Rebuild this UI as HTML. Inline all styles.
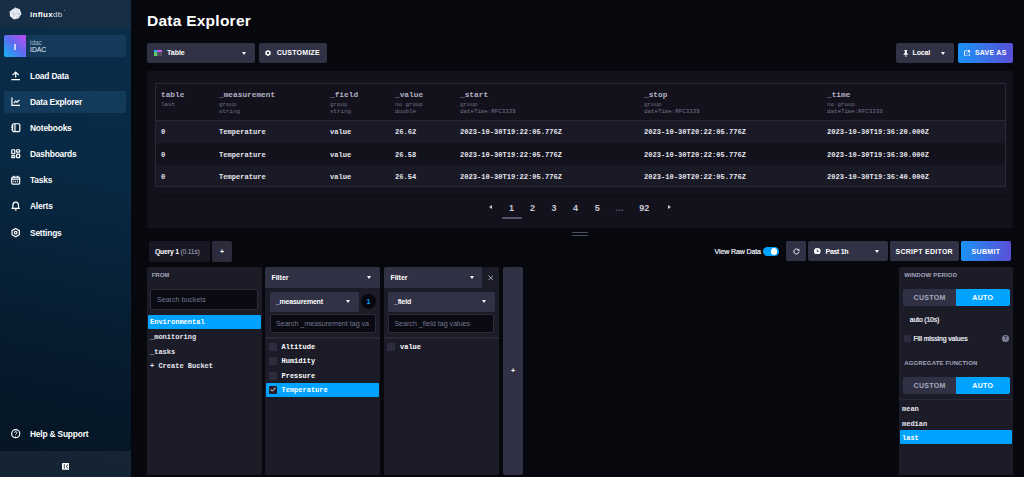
<!DOCTYPE html>
<html>
<head>
<meta charset="utf-8">
<title>Data Explorer</title>
<style>
*{box-sizing:border-box;margin:0;padding:0}
html,body{width:1024px;height:477px;overflow:hidden;background:#07070e;font-family:"Liberation Sans",sans-serif;color:#fff}
.abs{position:absolute}
i{font-style:normal}
#side{position:absolute;left:0;top:0;width:131px;height:477px;background:linear-gradient(192deg,#0a2d4a 0%,#082944 35%,#061a2c 75%,#051422 100%)}
#side .hdr{position:absolute;left:0;top:0;width:131px;height:28px;background:rgba(34,48,66,.55)}
#side .foot{position:absolute;left:0;top:451px;width:131px;height:26px;background:rgba(60,75,95,.28)}
.nav{position:absolute;left:4px;width:122px;height:21.5px;border-radius:2px}
.nav.on{background:rgba(40,90,130,.36)}
.nav span{position:absolute;left:26px;top:5px;font-size:9px;font-weight:bold;line-height:12px;white-space:nowrap;letter-spacing:-.2px;transform:scaleX(.93);transform-origin:0 0}
.nav svg{position:absolute;left:6.6px;top:6px;width:9.4px;height:9.4px;fill:none;stroke:#fff;stroke-width:1.3;overflow:visible}
#main{position:absolute;left:131px;top:0;width:893px;height:477px;background:#07070e}
.btn{position:absolute;height:20px;background:#323246;border-radius:2px;font-weight:bold;font-size:7px;line-height:20px;white-space:nowrap}
.b2{height:20.4px;line-height:21.4px}
.mono{font-family:"Liberation Mono",monospace}
.caret{position:absolute;width:0;height:0;border-left:2.9px solid transparent;border-right:2.9px solid transparent;border-top:3.2px solid #fff;margin-left:-.3px}
.th{position:absolute;top:90px;font-family:"Liberation Mono",monospace;font-size:7.8px;font-weight:bold;line-height:10px;color:#b2b2c4;white-space:nowrap}
.sh{position:absolute;font-family:"Liberation Mono",monospace;font-size:5.8px;line-height:7px;color:#74748c;white-space:nowrap}
.td{position:absolute;font-family:"Liberation Mono",monospace;font-weight:bold;font-size:7.08px;line-height:10px;color:#e7e7ef;white-space:nowrap}
.pg{position:absolute;top:202px;width:20px;text-align:center;font-size:9px;font-weight:bold;line-height:12px;color:#c9c9d6}
.panel{position:absolute;top:267px;height:207.8px;background:#1c1c29;border-radius:2px}
.lbl{position:absolute;font-size:6px;font-weight:bold;line-height:9px;color:#a6a6be;white-space:nowrap;letter-spacing:0}
.li{position:absolute;font-family:"Liberation Mono",monospace;font-weight:bold;font-size:7px;line-height:14px;color:#e7e7ef;white-space:nowrap;height:14px}
.li.sel{background:#00a3ff;color:#fff;border-radius:1px}
.inp{position:absolute;background:#0a0a12;border:1px solid #2b2b3c;border-radius:2px;font-size:7.1px;color:#74768e;white-space:nowrap;overflow:hidden}
.cb{position:absolute;width:8.2px;height:8.2px;background:#2c2c3e;border-radius:1px}
.seg{position:absolute;height:16.8px;font-size:7px;font-weight:bold;line-height:17.2px;text-align:center;letter-spacing:.3px}
</style>
</head>
<body>

<div id="side">
  <div class="hdr"></div>
  <svg class="abs" style="left:9px;top:7px" width="13" height="13" viewBox="0 0 13 13"><polygon points="6.2,0.6 10.8,2.2 12.4,6.9 9.6,11.3 4.9,12.4 1,9.3 0.6,4.4" fill="#eef2f6"/><path d="M6.2 0.6 L4.2 6.2 L9.6 11.3 M4.2 6.2 L0.6 4.4 M4.2 6.2 L4.9 12.4 M6.2 0.6 L10 7 L12.4 6.9 M10 7 L9.6 11.3 M4.2 6.2 L10 7" stroke="#aebccc" stroke-width=".6" fill="none"/></svg>
  <div class="abs" style="left:30px;top:8.8px;font-size:8px;line-height:11px;letter-spacing:.27px;white-space:nowrap"><b>influx</b><span style="color:#d5dde6">db</span></div>
  <div class="abs" style="left:63.6px;top:9.6px;width:1.6px;height:1.6px;background:#6f8196"></div>
  <div class="abs" style="left:4px;top:35px;width:122px;height:22px;background:rgba(40,90,130,.32);border-radius:2px"></div>
  <div class="abs" style="left:4px;top:35px;width:22px;height:22px;border-radius:2px 0 0 2px;background:linear-gradient(45deg,#10b7f5 0%,#5a6df0 50%,#c04af0 100%)"></div>
  <div class="abs" style="left:4px;top:35px;width:22px;height:22px;text-align:center;font-size:8.5px;font-weight:bold;line-height:24px">I</div>
  <div class="abs" style="left:30px;top:38.5px;font-size:6.3px;line-height:7px;color:#a9bccf">idac</div>
  <div class="abs" style="left:30px;top:45.5px;font-size:6.8px;line-height:8px;color:#e6edf5">IDAC</div>
  <div class="nav" style="top:64.9px"><svg viewBox="0 0 10 10"><path d="M5 1.4V7M1.7 4.4L5 1.1L8.3 4.4M0.4 9.2H9.6"/></svg><span>Load Data</span></div>
  <div class="nav on" style="top:91.0px"><svg viewBox="0 0 10 10"><path d="M1 0.6V9H9.6M3 6.6L5 4.4L6.4 5.6L9 3"/></svg><span>Data Explorer</span></div>
  <div class="nav" style="top:117.1px"><svg viewBox="0 0 10 10"><rect x="1.7" y=".8" width="7.7" height="8.4" rx="1.2"/><path d="M4.2 .8V9.2M.3 3H1.7M.3 5H1.7M.3 7H1.7"/></svg><span>Notebooks</span></div>
  <div class="nav" style="top:143.2px"><svg viewBox="0 0 10 10"><rect x=".8" y=".8" width="3.2" height="4.2" rx=".6"/><rect x="6" y=".8" width="3.2" height="2.6" rx=".6"/><rect x=".8" y="7" width="3.2" height="2.2" rx=".6"/><rect x="6" y="5.4" width="3.2" height="3.8" rx=".6"/></svg><span>Dashboards</span></div>
  <div class="nav" style="top:169.3px"><svg viewBox="0 0 10 10"><rect x=".8" y="2.3" width="8.4" height="7.3" rx="1"/><path d="M.8 4.4H9.2M3 .9V2.9M7 .9V2.9" /><path d="M2.6 6.9H3.6M4.5 6.9H5.5M6.4 6.9H7.4" stroke-width="1.4"/></svg><span>Tasks</span></div>
  <div class="nav" style="top:195.4px"><svg viewBox="0 0 10 10"><path d="M2 7.6V4.6A3 3.4 0 0 1 8 4.6V7.6M.6 7.8H9.4M4 9.5H6"/></svg><span>Alerts</span></div>
  <div class="nav" style="top:221.5px"><svg viewBox="0 0 10 10"><polygon points="5,.6 8.9,2.8 8.9,7.2 5,9.4 1.1,7.2 1.1,2.8"/><circle cx="5" cy="5" r="1.4"/></svg><span>Settings</span></div>
  <div class="nav" style="top:422.8px"><svg viewBox="0 0 10 10"><circle cx="5" cy="5" r="4.3"/><path d="M3.8 4A1.2 1.2 0 1 1 5.4 5.1Q5 5.3 5 6" stroke-width="1"/><circle cx="5" cy="7.4" r=".55" fill="#fff" stroke="none"/></svg><span>Help &amp; Support</span></div>
  <div class="foot"></div>
  <svg class="abs" style="left:61.7px;top:463.2px" width="7.6" height="6.8" viewBox="0 0 7.6 6.8"><rect x="0" y="0" width="7.6" height="6.8" rx=".9" fill="#fff"/><path d="M2.3 1V5.8" stroke="#16283a" stroke-width=".8"/><path d="M6.2 1.6L4 3.4L6.2 5.2" fill="none" stroke="#16283a" stroke-width=".9"/></svg>
</div>
<div class="abs" id="title" style="left:147px;top:11.7px;font-size:15.5px;font-weight:bold;line-height:17px;letter-spacing:.25px;white-space:nowrap">Data Explorer</div>
<div class="btn" style="left:147px;top:43px;width:108px"><svg class="abs" style="left:6.8px;top:6.8px" width="8.4" height="6.2" viewBox="0 0 8.4 6.2"><rect x="0" y="0" width="3.2" height="2.2" fill="#22adf6"/><rect x="3.2" y="0" width="5.2" height="2.2" fill="#c95af0"/><rect x="0" y="2.2" width="3.2" height="4" fill="#62d35f"/><rect x="3.2" y="2.2" width="5.2" height="4" fill="#5d5d70"/><path d="M3.2 4.2H8.4M5.8 2.2V6.2" stroke="#323246" stroke-width=".5"/></svg><span class="abs" style="left:20px">Table</span><i class="caret" style="left:95.5px;top:8.5px"></i></div>
<div class="btn" style="left:259px;top:43px;width:68px"><svg class="abs" style="left:6.4px;top:7.2px" width="6" height="6" viewBox="0 0 10 10"><polygon points="5,0 9.4,2.5 9.4,7.5 5,10 .6,7.5 .6,2.5" fill="#fff"/><circle cx="5" cy="5" r="1.9" fill="#323246"/></svg><span class="abs" style="left:17.7px;letter-spacing:.25px">CUSTOMIZE</span></div>
<div class="btn" style="left:896px;top:43px;width:58px"><svg class="abs" style="left:6.5px;top:6.5px" width="5.6" height="7" viewBox="0 0 8 10"><path d="M2 0H6V1H5.4V4.2L7.4 6V6.8H.6V6L2.6 4.2V1H2Z" fill="#fff"/><path d="M4 6.8V10" stroke="#fff" stroke-width="1.2"/></svg><span class="abs" style="left:16.5px;letter-spacing:-.15px">Local</span><i class="caret" style="left:45px;top:8.5px"></i></div>
<div class="btn" style="left:957.5px;top:43px;width:55.5px;background:linear-gradient(90deg,#1a93f7,#5a4fd6)"><svg class="abs" style="left:6px;top:6.8px" width="6.6" height="6.6" viewBox="0 0 10 10"><path d="M4.2 1.2H1.6Q.8 1.2 .8 2V8.4Q.8 9.2 1.6 9.2H8Q8.8 9.2 8.8 8.4V5.8" fill="none" stroke="#fff" stroke-width="1.5"/><path d="M5.6 .4H9.6V4.4ZM9 1L4.6 5.4" fill="#fff" stroke="#fff" stroke-width="1.3"/></svg><span class="abs" style="left:17.4px;letter-spacing:.25px">SAVE AS</span></div>
<div class="abs" style="left:147px;top:71px;width:866px;height:157px;background:#12111c;border-radius:2px"></div>
<div class="abs" style="left:155px;top:83px;width:851px;height:104px;border:1px solid #282836"></div>
<div class="abs" style="left:156px;top:120px;width:849px;height:1px;background:#282836"></div>
<div class="abs" style="left:156px;top:121px;width:849px;height:22px;background:#1a1a26"></div>
<div class="abs" style="left:156px;top:165px;width:849px;height:21px;background:#1a1a26"></div>
<div class="abs" style="left:155px;top:195px;width:851px;height:1px;background:#0a0a12"></div>
<div class="th" style="left:161px">table</div>
<div class="sh" style="left:161px;top:101px">last</div>
<div class="td" style="left:161px;top:127px">0</div>
<div class="td" style="left:161px;top:149.5px">0</div>
<div class="td" style="left:161px;top:171.5px">0</div>
<div class="th" style="left:219px">_measurement</div>
<div class="sh" style="left:219px;top:101px">group</div>
<div class="sh" style="left:219px;top:108px">string</div>
<div class="td" style="left:219px;top:127px">Temperature</div>
<div class="td" style="left:219px;top:149.5px">Temperature</div>
<div class="td" style="left:219px;top:171.5px">Temperature</div>
<div class="th" style="left:330px">_field</div>
<div class="sh" style="left:330px;top:101px">group</div>
<div class="sh" style="left:330px;top:108px">string</div>
<div class="td" style="left:330px;top:127px">value</div>
<div class="td" style="left:330px;top:149.5px">value</div>
<div class="td" style="left:330px;top:171.5px">value</div>
<div class="th" style="left:395px">_value</div>
<div class="sh" style="left:395px;top:101px">no group</div>
<div class="sh" style="left:395px;top:108px">double</div>
<div class="td" style="left:395px;top:127px">26.62</div>
<div class="td" style="left:395px;top:149.5px">26.58</div>
<div class="td" style="left:395px;top:171.5px">26.54</div>
<div class="th" style="left:460px">_start</div>
<div class="sh" style="left:460px;top:101px">group</div>
<div class="sh" style="left:460px;top:108px">dateTime:RFC3339</div>
<div class="td" style="left:460px;top:127px">2023-10-30T19:22:05.776Z</div>
<div class="td" style="left:460px;top:149.5px">2023-10-30T19:22:05.776Z</div>
<div class="td" style="left:460px;top:171.5px">2023-10-30T19:22:05.776Z</div>
<div class="th" style="left:644px">_stop</div>
<div class="sh" style="left:644px;top:101px">group</div>
<div class="sh" style="left:644px;top:108px">dateTime:RFC3339</div>
<div class="td" style="left:644px;top:127px">2023-10-30T20:22:05.776Z</div>
<div class="td" style="left:644px;top:149.5px">2023-10-30T20:22:05.776Z</div>
<div class="td" style="left:644px;top:171.5px">2023-10-30T20:22:05.776Z</div>
<div class="th" style="left:827px">_time</div>
<div class="sh" style="left:827px;top:101px">no group</div>
<div class="sh" style="left:827px;top:108px">dateTime:RFC3339</div>
<div class="td" style="left:827px;top:127px">2023-10-30T19:36:20.000Z</div>
<div class="td" style="left:827px;top:149.5px">2023-10-30T19:36:30.000Z</div>
<div class="td" style="left:827px;top:171.5px">2023-10-30T19:36:40.000Z</div>
<div class="pg" style="left:501.6px">1</div>
<div class="pg" style="left:522.4px">2</div>
<div class="pg" style="left:544.0px">3</div>
<div class="pg" style="left:565.5px">4</div>
<div class="pg" style="left:587.3px">5</div>
<div class="pg" style="left:609.4px;color:#5c5c74">…</div>
<div class="pg" style="left:634.2px">92</div>
<div class="abs" style="left:502px;top:217px;width:20px;height:2px;background:#55556e;border-radius:1px"></div>
<i class="abs" style="left:489px;top:205px;border-top:2.5px solid transparent;border-bottom:2.5px solid transparent;border-right:3px solid #c9c9d6"></i>
<i class="abs" style="left:667.5px;top:205px;border-top:2.5px solid transparent;border-bottom:2.5px solid transparent;border-left:3px solid #c9c9d6"></i>
<div class="abs" style="left:572px;top:232px;width:16px;height:1px;background:#4b4b63"></div>
<div class="abs" style="left:572px;top:235px;width:16px;height:1px;background:#4b4b63"></div>
<div class="abs" style="left:149px;top:241px;width:61px;height:20.5px;background:#181824;border-radius:2px;font-size:6.8px;letter-spacing:-.22px;line-height:21.5px;white-space:nowrap"><span class="abs" style="left:6px"><b>Query 1</b> <span style="color:#a9a9bd">(0.11s)</span></span></div>
<div class="abs" style="left:212px;top:241px;width:20px;height:20.5px;background:#2b2b3b;border-radius:2px;font-size:7px;font-weight:bold;line-height:21.6px;text-align:center">+</div>
<div class="abs" style="left:714.6px;top:246.8px;font-size:7px;line-height:10px;white-space:nowrap;color:#eeeef4;letter-spacing:-.12px;-webkit-text-stroke:.22px #eeeef4">View Raw Data</div>
<div class="abs" style="left:763px;top:246.8px;width:15.7px;height:9.2px;border-radius:4.6px;background:#00a3ff"></div>
<div class="abs" style="left:770.7px;top:248.1px;width:6.6px;height:6.6px;border-radius:3.3px;background:#fff"></div>
<div class="btn b2" style="left:786.4px;top:241px;width:20px"><svg class="abs" style="left:6.4px;top:6.9px" width="6.8" height="6.8" viewBox="0 0 8 8"><path d="M6.6 2.6A3 3 0 1 0 7 4.2" fill="none" stroke="#fff" stroke-width="1.1"/><path d="M7.4 .8V3.2H5Z" fill="#fff"/></svg></div>
<div class="btn b2" style="left:808.3px;top:241px;width:79.3px"><svg class="abs" style="left:6.2px;top:6.9px" width="6.6" height="6.6" viewBox="0 0 10 10"><circle cx="5" cy="5" r="5" fill="#fff"/><path d="M5 2.2V5.2H7.4" fill="none" stroke="#323246" stroke-width="1.3"/></svg><span class="abs" style="left:17.3px;letter-spacing:-.33px">Past 1h</span><i class="caret" style="left:66.9px;top:8.5px"></i></div>
<div class="btn b2" style="left:890px;top:241px;width:69px"><span class="abs" style="left:5.5px;letter-spacing:.27px">SCRIPT EDITOR</span></div>
<div class="btn b2" style="left:961px;top:241px;width:50px;background:linear-gradient(90deg,#1a93f7,#5a4fd6)"><span class="abs" style="left:10.6px;letter-spacing:.32px">SUBMIT</span></div>
<div class="panel" style="left:147.2px;width:114.8px"></div>
<div class="lbl" style="left:151.7px;top:270.5px">FROM</div>
<div class="inp" style="left:150.3px;top:289.2px;width:107.5px;height:20.6px;line-height:20.6px;padding-left:5.7px">Search buckets</div>
<div class="li sel" style="left:148.2px;top:315.2px;width:112.4px;padding-left:1.8px">Environmental</div>
<div class="li" style="left:150px;top:330px">_monitoring</div>
<div class="li" style="left:150px;top:345px">_tasks</div>
<div class="li" style="left:150px;top:359px">+ Create Bucket</div>
<div class="panel" style="left:265px;width:115px"></div>
<div class="abs" style="left:265px;top:267px;width:115px;height:21px;background:#313145;border-radius:2px 2px 0 0"></div>
<div class="abs" style="left:271.4px;top:272.5px;font-size:7px;font-weight:bold;line-height:10px">Filter</div>
<i class="caret" style="left:367.3px;top:276px"></i>
<div class="btn" style="left:270px;top:291.6px;width:88.6px;height:20.2px"><span class="abs" style="left:5.8px;font-size:7px;letter-spacing:-.2px">_measurement</span><i class="caret" style="left:76.2px;top:8.5px"></i></div>
<div class="abs" style="left:361px;top:294px;width:15px;height:15px;border-radius:8px;background:#07070e;color:#00a3ff;font-size:7px;font-weight:bold;line-height:15px;text-align:center">1</div>
<div class="inp" style="left:270px;top:313.7px;width:105.5px;height:19.5px;line-height:19.4px;padding-left:5px">Search _measurement tag va</div>
<div class="abs" style="left:265px;top:337px;width:115px;height:1.5px;background:#272739"></div>
<div class="cb" style="left:269px;top:342.5px"></div>
<div class="li" style="left:281.5px;top:339.5px;color:#fff">Altitude</div>
<div class="cb" style="left:269px;top:357.2px"></div>
<div class="li" style="left:281.5px;top:354.2px;color:#fff">Humidity</div>
<div class="cb" style="left:269px;top:371.9px"></div>
<div class="li" style="left:281.5px;top:368.9px;color:#fff">Pressure</div>
<div class="li sel" style="left:266px;top:383.1px;width:113px"></div>
<div class="cb" style="left:269px;top:386.1px;background:#241e2a"><svg class="abs" style="left:1px;top:1.4px" width="6" height="5" viewBox="0 0 6 5"><path d="M.5 2.4L2.3 4.2L5.6 .6" fill="none" stroke="#fff" stroke-width=".9"/></svg></div>
<div class="li" style="left:281.5px;top:383.1px;color:#fff">Temperature</div>
<div class="panel" style="left:384.2px;width:114.6px"></div>
<div class="abs" style="left:384.2px;top:267px;width:98.3px;height:21px;background:#313145;border-radius:2px 0 0 0"></div>
<div class="abs" style="left:390.4px;top:272.5px;font-size:7px;font-weight:bold;line-height:10px">Filter</div>
<i class="caret" style="left:469.8px;top:276px"></i>
<svg class="abs" style="left:487.6px;top:275px" width="5.6" height="5.6" viewBox="0 0 6 6"><path d="M.4 .4L5.6 5.6M5.6 .4L.4 5.6" stroke="#b4b4cc" stroke-width=".9"/></svg>
<div class="btn" style="left:388.2px;top:291.6px;width:106.8px;height:20.2px"><span class="abs" style="left:5.8px;font-size:7px;letter-spacing:-.2px">_field</span><i class="caret" style="left:94px;top:8.5px"></i></div>
<div class="inp" style="left:388.4px;top:313.7px;width:106px;height:19.5px;line-height:19.4px;padding-left:5px">Search _field tag values</div>
<div class="abs" style="left:384px;top:337px;width:114.6px;height:1.5px;background:#272739"></div>
<div class="cb" style="left:387.2px;top:342.6px"></div>
<div class="li" style="left:400px;top:339.5px;color:#fff">value</div>
<div class="panel" style="left:503px;width:20px;background:#313145"></div>
<div class="abs" style="left:503px;top:365px;width:20px;text-align:center;font-size:7px;font-weight:bold;line-height:12px">+</div>
<div class="panel" style="left:899.3px;width:113.7px"></div>
<div class="lbl" style="left:904.2px;top:270.8px;letter-spacing:.15px">WINDOW PERIOD</div>
<div class="seg" style="left:903.2px;top:289px;width:52.8px;background:#313145;color:#a9a9bd;border-radius:2px 0 0 2px">CUSTOM</div>
<div class="seg" style="left:956px;top:289px;width:53.6px;background:#00a3ff;border-radius:0 2px 2px 0">AUTO</div>
<div class="abs" style="left:909.8px;top:315.2px;font-size:6.8px;letter-spacing:-.12px;line-height:10px;color:#eeeef4;white-space:nowrap;-webkit-text-stroke:.22px #eeeef4">auto (10s)</div>
<div class="cb" style="left:904px;top:335px;width:7px;height:7px"></div>
<div class="abs" style="left:913.5px;top:333.6px;font-size:6.9px;letter-spacing:-.1px;line-height:10px;color:#eeeef4;white-space:nowrap;-webkit-text-stroke:.22px #eeeef4">Fill missing values</div>
<div class="abs" style="left:1001.8px;top:334.9px;width:7.4px;height:7.4px;border-radius:3.7px;background:#82829c;color:#1c1c29;font-size:5.6px;font-weight:bold;line-height:7.6px;text-align:center">?</div>
<div class="lbl" style="left:904.2px;top:358.5px;letter-spacing:.13px">AGGREGATE FUNCTION</div>
<div class="seg" style="left:903.2px;top:376.8px;width:52.8px;background:#313145;color:#a9a9bd;border-radius:2px 0 0 2px">CUSTOM</div>
<div class="seg" style="left:956px;top:376.8px;width:53.6px;background:#00a3ff;border-radius:0 2px 2px 0">AUTO</div>
<div class="abs" style="left:899.3px;top:398.8px;width:113.7px;height:1.5px;background:#272739"></div>
<div class="li" style="left:902px;top:402.1px">mean</div>
<div class="li" style="left:902px;top:416.9px">median</div>
<div class="li sel" style="left:900.3px;top:430.2px;width:111.6px;padding-left:1.7px;line-height:16.4px">last</div>
</body>
</html>
